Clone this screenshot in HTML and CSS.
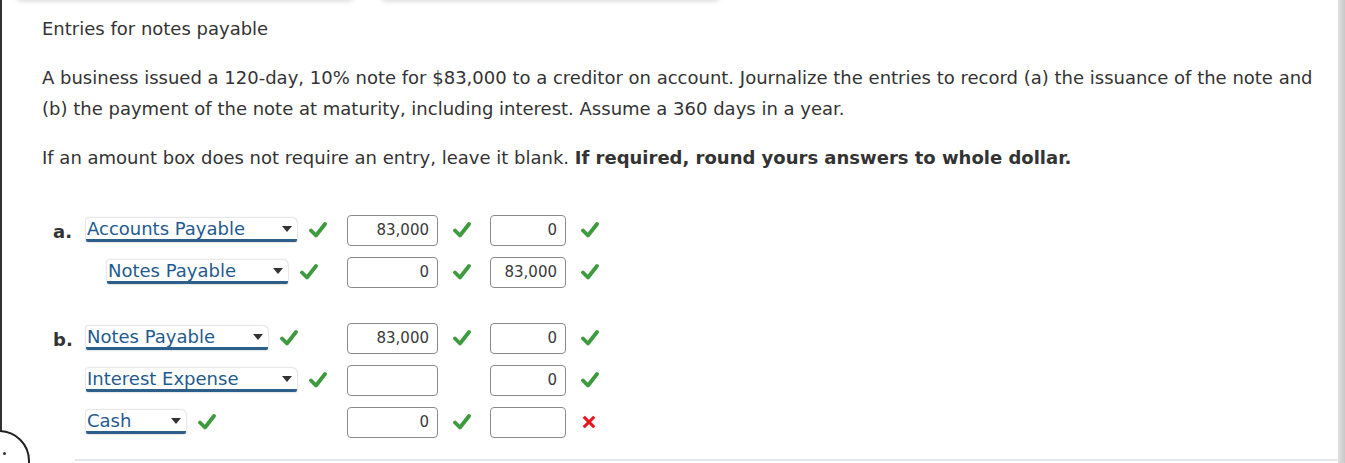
FILE: index.html
```html
<!DOCTYPE html>
<html lang="en">
<head>
    <meta charset="UTF-8">
    <title>Entries for notes payable</title>
    <link rel="stylesheet" href="styles.css">
</head>
<body>
    <div class="tabs">
        <div class="tab tab-first"></div>
        <div class="tab tab-second"></div>
    </div>

    <div class="question">
        <p class="title">Entries for notes payable</p>

        <p class="prompt">A business issued a 120-day, 10% note for $83,000 to a creditor on account. Journalize the entries to record (a) the issuance of the note and (b) the payment of the note at maturity, including interest. Assume a 360 days in a year.</p>

        <p class="hint">If an amount box does not require an entry, leave it blank. <b>If required, round yours answers to whole dollar.</b></p>

        <div class="journal">
            <div class="row">
                <span class="letter">a.</span>
                <div class="account">
                    <div class="select w-211">Accounts Payable<i class="caret"></i></div>
                    <svg class="ok" viewBox="0 0 18 18"><path d="M2 9.5 L7 14.5 L16 3"/></svg>
                </div>
                <div class="amount wide">83,000</div>
                <svg class="ok" viewBox="0 0 18 18"><path d="M2 9.5 L7 14.5 L16 3"/></svg>
                <div class="amount">0</div>
                <svg class="ok" viewBox="0 0 18 18"><path d="M2 9.5 L7 14.5 L16 3"/></svg>
            </div>
            <div class="row">
                <span class="letter"></span>
                <div class="account indent">
                    <div class="select w-181">Notes Payable<i class="caret"></i></div>
                    <svg class="ok" viewBox="0 0 18 18"><path d="M2 9.5 L7 14.5 L16 3"/></svg>
                </div>
                <div class="amount wide">0</div>
                <svg class="ok" viewBox="0 0 18 18"><path d="M2 9.5 L7 14.5 L16 3"/></svg>
                <div class="amount">83,000</div>
                <svg class="ok" viewBox="0 0 18 18"><path d="M2 9.5 L7 14.5 L16 3"/></svg>
            </div>

            <div class="row group">
                <span class="letter">b.</span>
                <div class="account">
                    <div class="select w-182">Notes Payable<i class="caret"></i></div>
                    <svg class="ok" viewBox="0 0 18 18"><path d="M2 9.5 L7 14.5 L16 3"/></svg>
                </div>
                <div class="amount wide">83,000</div>
                <svg class="ok" viewBox="0 0 18 18"><path d="M2 9.5 L7 14.5 L16 3"/></svg>
                <div class="amount">0</div>
                <svg class="ok" viewBox="0 0 18 18"><path d="M2 9.5 L7 14.5 L16 3"/></svg>
            </div>
            <div class="row">
                <span class="letter"></span>
                <div class="account">
                    <div class="select w-211">Interest Expense<i class="caret"></i></div>
                    <svg class="ok" viewBox="0 0 18 18"><path d="M2 9.5 L7 14.5 L16 3"/></svg>
                </div>
                <div class="amount wide"></div>
                <span></span>
                <div class="amount">0</div>
                <svg class="ok" viewBox="0 0 18 18"><path d="M2 9.5 L7 14.5 L16 3"/></svg>
            </div>
            <div class="row">
                <span class="letter"></span>
                <div class="account">
                    <div class="select w-100">Cash<i class="caret"></i></div>
                    <svg class="ok" viewBox="0 0 18 18"><path d="M2 9.5 L7 14.5 L16 3"/></svg>
                </div>
                <div class="amount wide">0</div>
                <svg class="ok" viewBox="0 0 18 18"><path d="M2 9.5 L7 14.5 L16 3"/></svg>
                <div class="amount"></div>
                <svg class="bad" viewBox="0 0 16 16"><path d="M2 2 L14 14 M14 2 L2 14"/></svg>
            </div>
        </div>

        <div class="divider"></div>
    </div>

    <!-- floating help button, only its corner shows -->
    <div class="help-clip">
        <div class="help"><i class="help-dot"></i></div>
    </div>
    <div class="scroll-edge"></div>
</body>
</html>
```

FILE: styles.css
```css
html, body {
    height: 100%;
    overflow: hidden;
}

body {
    margin: 0;
    font-family: "DejaVu Sans", Verdana, sans-serif;
    font-size: 18px;
    color: #333;
    background-color: #ffffff;
}

.tabs {
    position: absolute;
    top: -10px;
    left: 15px;
    display: flex;
    gap: 24px;
}

.tab {
    height: 10px;
    border-radius: 0 0 8px 8px;
    background-color: #ffffff;
    box-shadow: 0 2px 4px rgba(0, 0, 0, 0.12);
}

.tab-first {
    width: 340px;
}

.tab-second {
    width: 342px;
}

.question {
    box-sizing: border-box;
    border-left: 2px solid #333;
    margin-right: 7px;
    padding: 19px 0 0 40px;
    height: 100%;
}

.question p {
    margin: 0;
}

.title {
    line-height: 20px;
}

.prompt {
    margin-top: 23px !important;
    line-height: 31px;
}

.hint {
    margin-top: 18px !important;
    line-height: 31px;
}

.journal {
    margin-top: 36px;
    padding-left: 11px;
}

.row {
    display: grid;
    grid-template-columns: 33px 261px 91px 52px 76px 40px;
    align-items: center;
    height: 42px;
}

.row.group {
    margin-top: 24px;
}

.letter {
    font-weight: bold;
    padding-top: 3px;
}

.account {
    display: flex;
    align-items: center;
    gap: 12px;
}

.account.indent {
    padding-left: 21px;
}

.select {
    position: relative;
    box-sizing: border-box;
    height: 24px;
    line-height: 21px;
    padding-left: 1px;
    color: #1f5b8e;
    background-color: #ffffff;
    border-radius: 2px 5px 2px 2px;
    box-shadow: 0 0 2px rgba(0, 0, 0, 0.35);
    border-bottom: 3px solid #2c5f8a;
}

.w-211 { width: 211px; }
.w-181 { width: 181px; }
.w-182 { width: 182px; }
.w-100 { width: 100px; }

.caret {
    position: absolute;
    right: 5px;
    top: 8px;
    border-left: 5px solid transparent;
    border-right: 5px solid transparent;
    border-top: 6px solid #333;
}

.amount {
    box-sizing: border-box;
    height: 31px;
    line-height: 29px;
    border: 1px solid #8a8a8a;
    border-radius: 4px;
    padding-right: 8px;
    text-align: right;
    font-size: 15px;
    color: #3a3a3a;
    background-color: #ffffff;
}

.ok {
    width: 18px;
    height: 18px;
}

.bad {
    width: 14px;
    height: 14px;
}

.row > .ok {
    margin-left: 15px;
}

.row > .bad {
    margin-left: 16px;
}

.ok path {
    fill: none;
    stroke: #3d9a3d;
    stroke-width: 3.8;
    stroke-linecap: round;
    stroke-linejoin: round;
}

.bad path {
    fill: none;
    stroke: #e8141c;
    stroke-width: 3.6;
}

.divider {
    margin: 16px 0 0 33px;
    border-top: 2px solid #e3e8ee;
}

.help-clip {
    position: absolute;
    left: 0;
    bottom: 0;
    width: 40px;
    height: 40px;
    overflow: hidden;
}

.help {
    position: absolute;
    left: -32px;
    top: 7px;
    width: 58px;
    height: 58px;
    border: 2px solid #222;
    border-radius: 50%;
    background-color: #ffffff;
}

.help-dot {
    position: absolute;
    left: 33px;
    top: 20px;
    width: 3px;
    height: 3px;
    border-radius: 50%;
    background-color: #333;
}

.scroll-edge {
    position: absolute;
    top: 0;
    right: 0;
    width: 7px;
    height: 100%;
    background: linear-gradient(to right, #e0e0e0, #c8c8c8);
}
```
